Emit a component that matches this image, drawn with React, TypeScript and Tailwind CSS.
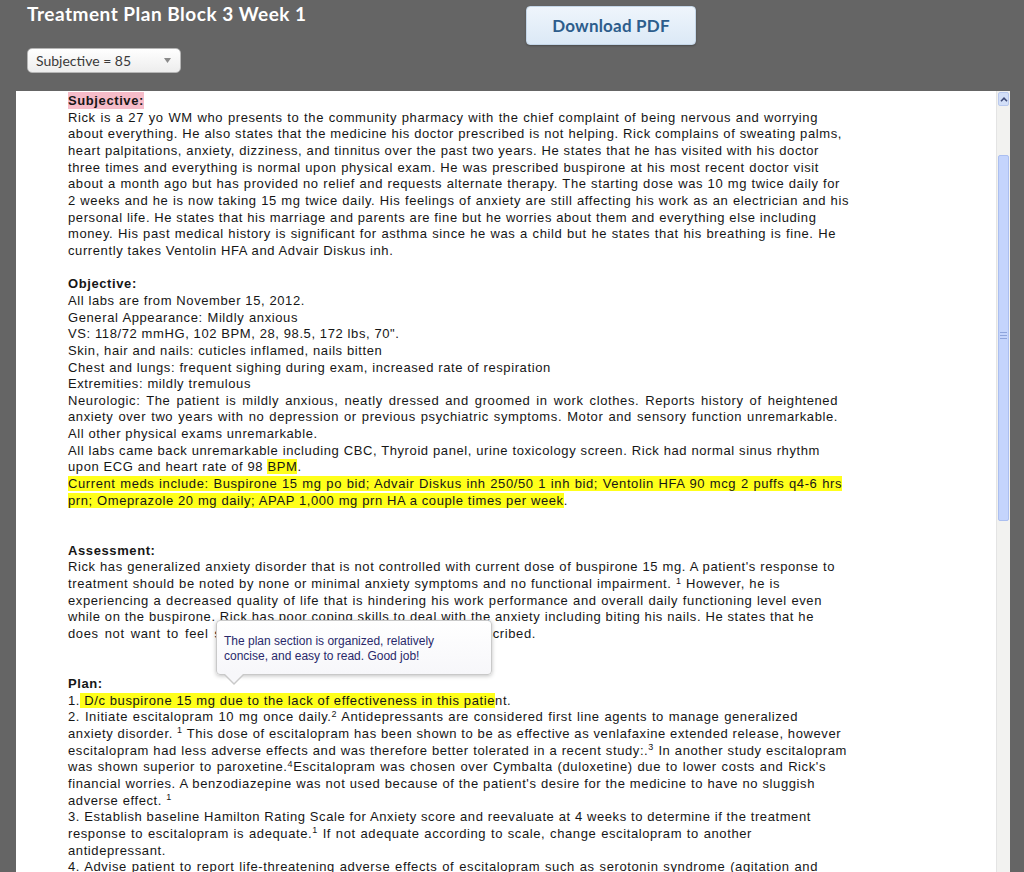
import type { ReactNode } from 'react';

const body = { fontFamily: '"Liberation Sans", Arial, sans-serif' };
const ui = { fontFamily: 'Lato, "Open Sans", sans-serif' };

// one line of the note; lines with a width are stretched to that width like the original doc
function Line({ w, children }: { w?: string; children?: ReactNode }) {
  return (
    <div className={`whitespace-nowrap h-[16.67px] ${w ? `${w} text-justify [text-align-last:justify]` : ''}`}>
      {children ?? '\u00a0'}
    </div>
  );
}

function Heading({ children, pink }: { children: ReactNode; pink?: boolean }) {
  return (
    <div className="h-[16.67px] whitespace-nowrap">
      <span className={`font-bold text-[13px] ${pink ? 'bg-[#f6bcc9] py-[1px]' : ''}`}>{children}</span>
    </div>
  );
}

const Sup = ({ n }: { n: string }) => <sup className="text-[9px]">{n}</sup>;
const Hl = ({ children }: { children: ReactNode }) => <span className="bg-[#ffff1a]">{children}</span>;

function Scrollbar() {
  return (
    <div className="w-[14px] flex flex-col border-l border-[#e4e4e4] bg-[#f2f2f0] pt-[1px]">
      <div className="h-[14px] mx-[1px] flex items-center justify-center rounded-[2px] bg-[#d3dff7] border border-[#b9c9ee]">
        <svg width="8" height="5" viewBox="0 0 8 5">
          <path d="M1 4.2 L4 1.2 L7 4.2" fill="none" stroke="#3f4c78" strokeWidth="1.6" />
        </svg>
      </div>
      <div className="h-[49px]" />
      <div className="h-[366px] mx-[1px] rounded-[2px] bg-[#c4d4fc] border border-[#abbff0] flex flex-col items-center pt-[176px] gap-[2px]">
        <div className="w-[7px] h-px bg-[#8ea4dc]" />
        <div className="w-[7px] h-px bg-[#8ea4dc]" />
        <div className="w-[7px] h-px bg-[#8ea4dc]" />
      </div>
      <div className="flex-1" />
    </div>
  );
}

export default function App() {
  return (
    <div className="h-[872px] w-[1024px] overflow-hidden bg-[#656565]">
      {/* Header */}
      <div className="h-[91px] flex pl-[27px]">
        <div className="w-[499px]">
          <h1 style={ui} className="pt-[3px] text-[19px] leading-[22px] tracking-[0.5px] font-bold text-white">
            Treatment Plan Block 3 Week 1
          </h1>
          <div
            style={ui}
            className="mt-[23px] w-[154px] h-[25px] rounded-[5px] border border-[#b5b5b5] bg-gradient-to-b from-white to-[#ededed] flex items-center justify-between pl-[8px] pr-[9px] text-[14px] text-[#3a3a3a]"
          >
            <span>Subjective = 85</span>
            <svg width="7" height="5" viewBox="0 0 7 5">
              <path d="M0 0 H7 L3.5 5 Z" fill="#8a8a8a" />
            </svg>
          </div>
        </div>
        <div className="pt-[6px]">
          <button
            style={ui}
            className="w-[170px] h-[39px] rounded-[4px] border border-[#c4d6e8] bg-gradient-to-b from-[#eef5fc] to-[#dce9f6] text-[17px] tracking-[0.2px] font-bold text-[#2d5d8c] shadow-[0_1px_2px_rgba(0,0,0,0.25)]"
          >
            Download PDF
          </button>
        </div>
      </div>

      {/* Document panel */}
      <div className="ml-[16px] mr-[14px] h-[781px] bg-white flex overflow-hidden">
        <div style={body} className="relative flex-1 pt-[2px] pl-[52px] text-[13px] leading-[16.67px] tracking-[0.6px] text-[#161616]">
          <Heading pink>Subjective:</Heading>
          <Line w="w-[750px]">Rick is a 27 yo WM who presents to the community pharmacy with the chief complaint of being nervous and worrying</Line>
          <Line w="w-[774px]">about everything. He also states that the medicine his doctor prescribed is not helping. Rick complains of sweating palms,</Line>
          <Line w="w-[751px]">heart palpitations, anxiety, dizziness, and tinnitus over the past two years. He states that he has visited with his doctor</Line>
          <Line w="w-[751px]">three times and everything is normal upon physical exam. He was prescribed buspirone at his most recent doctor visit</Line>
          <Line w="w-[772px]">about a month ago but has provided no relief and requests alternate therapy. The starting dose was 10 mg twice daily for</Line>
          <Line w="w-[781px]">2 weeks and he is now taking 15 mg twice daily. His feelings of anxiety are still affecting his work as an electrician and his</Line>
          <Line w="w-[748px]">personal life. He states that his marriage and parents are fine but he worries about them and everything else including</Line>
          <Line w="w-[768px]">money. His past medical history is significant for asthma since he was a child but he states that his breathing is fine. He</Line>
          <Line>currently takes Ventolin HFA and Advair Diskus inh.</Line>
          <Line />

          <Heading>Objective:</Heading>
          <Line>All labs are from November 15, 2012.</Line>
          <Line w="w-[230px]">General Appearance: Mildly anxious</Line>
          <Line>VS: 118/72 mmHG, 102 BPM, 28, 98.5, 172 lbs, 70".</Line>
          <Line>Skin, hair and nails: cuticles inflamed, nails bitten</Line>
          <Line>Chest and lungs: frequent sighing during exam, increased rate of respiration</Line>
          <Line w="w-[183px]">Extremities: mildly tremulous</Line>
          <Line w="w-[770px]">Neurologic: The patient is mildly anxious, neatly dressed and groomed in work clothes. Reports history of heightened</Line>
          <Line w="w-[770px]">anxiety over two years with no depression or previous psychiatric symptoms. Motor and sensory function unremarkable.</Line>
          <Line>All other physical exams unremarkable.</Line>
          <Line w="w-[752px]">All labs came back unremarkable including CBC, Thyroid panel, urine toxicology screen. Rick had normal sinus rhythm</Line>
          <Line>upon ECG and heart rate of 98 <Hl>BPM</Hl>.</Line>
          <Line w="w-[774px]"><Hl>Current meds include: Buspirone 15 mg po bid; Advair Diskus inh 250/50 1 inh bid; Ventolin HFA 90 mcg 2 puffs q4-6 hrs</Hl></Line>
          <Line><Hl>prn; Omeprazole 20 mg daily; APAP 1,000 mg prn HA a couple times per week</Hl>.</Line>
          <Line />
          <Line />

          <Heading>Assessment:</Heading>
          <Line w="w-[767px]">Rick has generalized anxiety disorder that is not controlled with current dose of buspirone 15 mg. A patient's response to</Line>
          <Line w="w-[712px]">treatment should be noted by none or minimal anxiety symptoms and no functional impairment. <Sup n="1" /> However, he is</Line>
          <Line w="w-[754px]">experiencing a decreased quality of life that is hindering his work performance and overall daily functioning level even</Line>
          <Line w="w-[746px]">while on the buspirone. Rick has poor coping skills to deal with the anxiety including biting his nails. He states that he</Line>
          <Line w="w-[468px]">does not want to feel sedated from the medicine he will be prescribed.</Line>
          <Line />
          <Line />

          <Heading>Plan:</Heading>
          <Line>1.<Hl> D/c buspirone 15 mg due to the lack of effectiveness in this patie</Hl>nt.</Line>
          <Line w="w-[730px]">2. Initiate escitalopram 10 mg once daily.<Sup n="2" /> Antidepressants are considered first line agents to manage generalized</Line>
          <Line w="w-[771px]">anxiety disorder. <Sup n="1" /> This dose of escitalopram has been shown to be as effective as venlafaxine extended release, however</Line>
          <Line w="w-[779px]">escitalopram had less adverse effects and was therefore better tolerated in a recent study:.<Sup n="3" /> In another study escitalopram</Line>
          <Line w="w-[758px]">was shown superior to paroxetine.<Sup n="4" />Escitalopram was chosen over Cymbalta (duloxetine) due to lower costs and Rick's</Line>
          <Line w="w-[747px]">financial worries. A benzodiazepine was not used because of the patient's desire for the medicine to have no sluggish</Line>
          <Line>adverse effect. <Sup n="1" /></Line>
          <Line w="w-[743px]">3. Establish baseline Hamilton Rating Scale for Anxiety score and reevaluate at 4 weeks to determine if the treatment</Line>
          <Line w="w-[684px]">response to escitalopram is adequate.<Sup n="1" /> If not adequate according to scale, change escitalopram to another</Line>
          <Line>antidepressant.</Line>
          <Line w="w-[750px]">4. Advise patient to report life-threatening adverse effects of escitalopram such as serotonin syndrome (agitation and</Line>
          <Line>hallucinations), and to seek medical help immediately.</Line>

          {/* Comment tooltip */}
          <div className="absolute left-[200px] top-[529px] w-[276px] h-[55px] rounded-[4px] border border-[#c9c9c9] bg-gradient-to-b from-white to-[#f7f7fa] shadow-[0_1px_4px_rgba(0,0,0,0.25)] pl-[7px] pt-[13px] text-[12px] leading-[15px] tracking-normal text-[#29296b]">
            <div>The plan section is organized, relatively</div>
            <div>concise, and easy to read. Good job!</div>
            <div className="absolute left-[7px] top-[54px] w-0 h-0 border-x-[10px] border-t-[10px] border-x-transparent border-t-[#c9c9c9]" />
            <div className="absolute left-[8px] top-[53px] w-0 h-0 border-x-[9px] border-t-[9px] border-x-transparent border-t-[#f7f7fa]" />
          </div>
        </div>
        <Scrollbar />
      </div>
    </div>
  );
}
